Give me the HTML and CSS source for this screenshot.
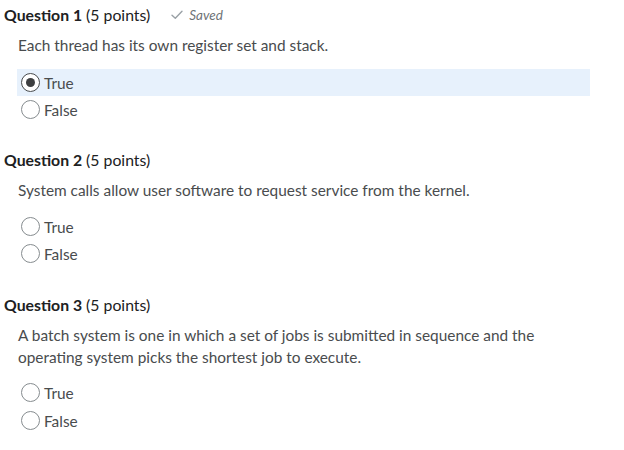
FILE: index.html
```html
<!DOCTYPE html>
<html>
<head>
<meta charset="utf-8">
<link rel="stylesheet" href="styles.css">
</head>
<body>
<div class="quiz">
  <section class="question">
    <h2 class="q-title"><strong>Question 1</strong> (5 points) <span class="saved"><svg class="check" width="12" height="10" viewBox="0 0 12 10"><path d="M1 5.2 L4.3 8.3 L11 1.2" fill="none" stroke="#9aa1a6" stroke-width="1.4" stroke-linecap="round" stroke-linejoin="round"/></svg><em>Saved</em></span></h2>
    <p class="q-text">Each thread has its own register set and stack.</p>
    <ul class="options">
      <li class="option selected"><span class="radio checked"></span>True</li>
      <li class="option"><span class="radio"></span>False</li>
    </ul>
  </section>
  <section class="question">
    <h2 class="q-title"><strong>Question 2</strong> (5 points)</h2>
    <p class="q-text">System calls allow user software to request service from the kernel.</p>
    <ul class="options">
      <li class="option"><span class="radio"></span>True</li>
      <li class="option"><span class="radio"></span>False</li>
    </ul>
  </section>
  <section class="question">
    <h2 class="q-title"><strong>Question 3</strong> (5 points)</h2>
    <p class="q-text">A batch system is one in which a set of jobs is submitted in sequence and the operating system picks the shortest job to execute.</p>
    <ul class="options">
      <li class="option"><span class="radio"></span>True</li>
      <li class="option"><span class="radio"></span>False</li>
    </ul>
  </section>
</div>
</body>
</html>
```
FILE: styles.css
```css
html, body {
  margin: 0;
  padding: 0;
  background: #ffffff;
}
body {
  font-family: Lato, "Open Sans", sans-serif;
  color: #494c4e;
}
.quiz {
  padding: 4px 0 0 4px;
  width: 586px;
}
.question {
  margin-bottom: 26px;
}
.question:first-child + .question {
  margin-bottom: 27px;
}
.q-title {
  margin: 0;
  font-size: 15.8px;
  line-height: 22px;
  font-weight: 400;
  color: #202122;
  display: flex;
  align-items: center;
}
.q-title strong {
  font-weight: 700;
  margin-right: 4px;
}
.saved {
  display: inline-flex;
  align-items: center;
  margin-left: 21px;
  font-size: 13.5px;
  color: #6e7376;
}
.check {
  margin-right: 6px;
}
.q-text {
  margin: 8px 0 0 14px;
  font-size: 15.4px;
  line-height: 22px;
  color: #494c4e;
  width: 540px;
}
.options {
  list-style: none;
  margin: 12px 0 0 13px;
  padding: 0;
}
.question:first-child .options {
  margin-top: 13px;
}
.question:last-child .options {
  margin-top: 11px;
}
.option {
  display: flex;
  align-items: center;
  height: 27px;
  font-size: 15.4px;
  color: #494c4e;
  padding-left: 4px;
}
.question:last-child .option + .option {
  height: 28px;
  padding-top: 1px;
  box-sizing: border-box;
}
.option.selected {
  background: #e7f1fc;
}
.radio {
  box-sizing: border-box;
  width: 19px;
  height: 19px;
  border-radius: 50%;
  border: 1px solid #868c8f;
  background: #ffffff;
  margin-right: 4px;
  display: flex;
  align-items: center;
  justify-content: center;
}
.radio.checked {
  border: 1.5px solid #494c4e;
}
.radio.checked::after {
  content: "";
  width: 9px;
  height: 9px;
  border-radius: 50%;
  background: #3d3f41;
}
```
